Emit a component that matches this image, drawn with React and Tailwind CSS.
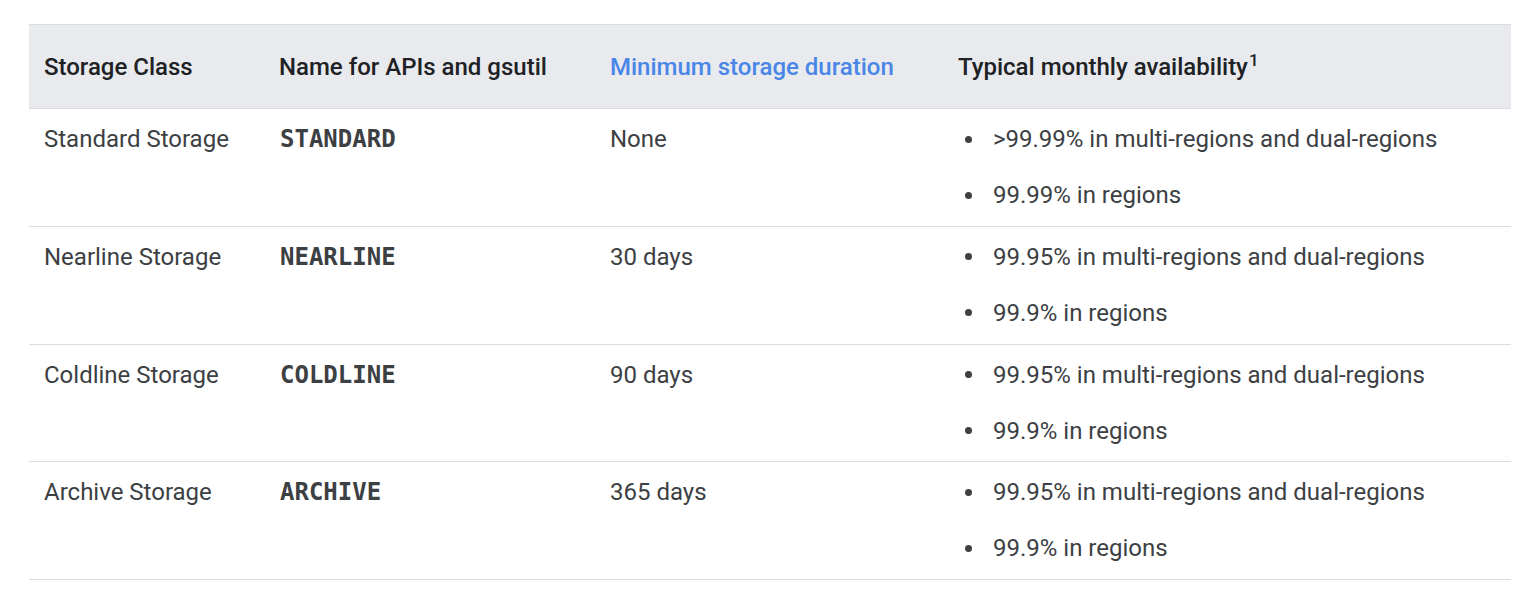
import React from "react";

const rows = [
  {
    name: "Standard Storage",
    api: "STANDARD",
    dur: "None",
    avail: [">99.99% in multi-regions and dual-regions", "99.99% in regions"],
  },
  {
    name: "Nearline Storage",
    api: "NEARLINE",
    dur: "30 days",
    avail: ["99.95% in multi-regions and dual-regions", "99.9% in regions"],
  },
  {
    name: "Coldline Storage",
    api: "COLDLINE",
    dur: "90 days",
    avail: ["99.95% in multi-regions and dual-regions", "99.9% in regions"],
  },
  {
    name: "Archive Storage",
    api: "ARCHIVE",
    dur: "365 days",
    avail: ["99.95% in multi-regions and dual-regions", "99.9% in regions"],
  },
];

export default function App() {
  return (
    <div
      className="w-[1536px] h-[594px] bg-white pt-[24px] pl-[29px]"
      style={{ fontFamily: "Roboto, 'Noto Sans', sans-serif" }}
    >
      <table className="w-[1482px] table-fixed border-collapse text-[24px] leading-[36px] text-[#3c4043]">
        <colgroup>
          <col className="w-[235px]" />
          <col className="w-[331px]" />
          <col className="w-[348px]" />
          <col />
        </colgroup>
        <thead>
          <tr className="bg-[#e8eaed] border-t border-b border-[#dadce0]">
            <th className="h-[84px] px-[15px] text-left font-medium text-[#202124] align-middle">
              Storage Class
            </th>
            <th className="px-[15px] text-left font-medium text-[#202124] align-middle">
              Name for APIs and gsutil
            </th>
            <th className="px-[15px] text-left font-medium text-[#4a86e8] align-middle">
              Minimum storage duration
            </th>
            <th className="px-[15px] text-left font-medium text-[#202124] align-middle">
              Typical monthly availability
              <sup className="text-[17px] leading-none relative -top-[9px] ml-[1px]">1</sup>
            </th>
          </tr>
        </thead>
        <tbody>
          {rows.map((r) => (
            <tr key={r.api} className="border-b border-[#dadce0]">
              <td className="px-[15px] pt-[12px] pb-[12.75px] align-top">{r.name}</td>
              <td
                className="px-[15px] pt-[12px] align-top font-bold text-[#3c4043] text-[24px]"
                style={{ fontFamily: "'DejaVu Sans Mono', 'Liberation Mono', monospace" }}
              >
                <span className="relative left-[1px]">{r.api}</span>
              </td>
              <td className="px-[15px] pt-[12px] align-top">{r.dur}</td>
              <td className="px-[15px] pt-[12px] pb-[12.75px] align-top">
                <ul className="flex flex-col gap-[20px]">
                  {r.avail.map((a) => (
                    <li key={a} className="flex items-center">
                      <span className="w-[7px] h-[7px] rounded-full bg-[#3c4043] ml-[7px] mr-[21px] shrink-0" />
                      <span>{a}</span>
                    </li>
                  ))}
                </ul>
              </td>
            </tr>
          ))}
        </tbody>
      </table>
    </div>
  );
}
